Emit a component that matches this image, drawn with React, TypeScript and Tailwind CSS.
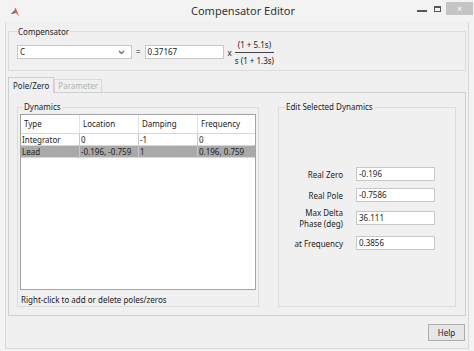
import React from 'react';

const rows = [
  { type: 'Integrator', loc: '0', damp: '-1', freq: '0', sel: false },
  { type: 'Lead', loc: '-0.196, -0.759', damp: '1', freq: '0.196, 0.759', sel: true },
];

function Field({ label, value, mt }: { label: React.ReactNode; value: string; mt: string }) {
  return (
    <div className={`flex items-center ${mt}`}>
      <div className="w-[64px] text-right leading-[11px]">{label}</div>
      <div className="ml-[13px] w-[79px] h-[14px] bg-white border border-[#c8c8c8] pl-[2px] leading-[12px]">{value}</div>
    </div>
  );
}

export default function App() {
  return (
    <div
      className="w-[474px] h-[351px] bg-[#f3f3f3] flex flex-col text-[8px] text-[#222]"
      style={{ fontFamily: '"Noto Sans", "Open Sans", sans-serif' }}
    >
      {/* Title bar */}
      <div className="h-[22px] flex items-center shrink-0">
        <div className="w-[60px] pl-[11px] flex items-center">
          <svg width="8" height="9" viewBox="0 0 8 9">
            <path d="M0 7 L3 4 L4.5 0.5 L8 9 L5 6 Z" fill="#e0602a" />
            <path d="M0 7 L3 4 L4 6 Z" fill="#3a6fb0" />
          </svg>
        </div>
        <div className="flex-1 text-center text-[11px] text-[#333] pl-[16px]">Compensator Editor</div>
        <div className="w-[64px] flex items-start h-full">
          <div className="w-[10px] ml-[7px] mt-[10px] h-[2px] bg-[#555]" />
          <div className="ml-[7px] mt-[6px] w-[7px] h-[6px] border border-[#555] border-t-2" />
          <div className="ml-[5px] mt-[2px] w-[27px] h-[13px] bg-[#c5c5c5] flex items-center justify-center text-white text-[9px]">
            ×
          </div>
        </div>
      </div>

      {/* Window body */}
      <div className="mx-[5px] flex-1 border-x border-b border-[#d9d9d9] bg-[#f0f0f0] flex flex-col px-[2px] mb-[2px]">
        {/* Compensator group */}
        <div className="relative mt-[9px] h-[40px] border border-[#dcdcdc] flex items-center pl-[8px]">
          <span className="absolute -top-[6px] left-[8px] px-[1px] bg-[#f0f0f0] text-[#222]">Compensator</span>
          <div className="w-[115px] h-[14px] bg-white border border-[#c8c8c8] flex items-center justify-between pl-[2px] pr-[6px] mt-[2px]">
            <span>C</span>
            <svg width="7" height="5" viewBox="0 0 7 5">
              <path d="M1 1 L3.5 3.5 L6 1" stroke="#666" strokeWidth="1.2" fill="none" />
            </svg>
          </div>
          <span className="ml-[4px] mt-[2px]">=</span>
          <div className="ml-[4px] w-[79px] h-[14px] bg-white border border-[#c8c8c8] pl-[2px] leading-[12px] mt-[2px]">0.37167</div>
          <span className="ml-[4px] mt-[4px]">x</span>
          <div className="ml-[3px] flex flex-col items-center mt-[2px]">
            <span className="px-[3px] leading-[11px]">(1 + 5.1s)</span>
            <div className="w-full h-[1px] bg-[#444] my-[2px]" />
            <span className="leading-[11px]">s (1 + 1.3s)</span>
          </div>
        </div>

        {/* Tabs */}
        <div className="mt-[6px] flex items-end h-[15px]">
          <div className="h-[16px] px-[4px] border border-b-0 border-[#cfcfcf] bg-[#f0f0f0] relative top-[1px] flex items-center">
            Pole/Zero
          </div>
          <div className="h-[13px] px-[3px] border border-b-0 border-[#d8d8d8] text-[#b0b0b0] flex items-center">
            Parameter
          </div>
        </div>
        <div className="h-[224px] border border-[#cfcfcf] flex pt-[14px] pl-[8px] pr-[9px]">
          {/* Dynamics */}
          <div className="relative w-[242px] h-[200px] border border-[#dcdcdc] flex flex-col px-[2px]">
            <span className="absolute -top-[7px] left-[5px] px-[1px] bg-[#f0f0f0]">Dynamics</span>
            <div className="mt-[6px] h-[177px] bg-white border border-[#a3a3a3]">
              <div className="grid grid-cols-[58px_59px_59px_1fr] h-[18px] items-center">
                {['Type', 'Location', 'Damping', 'Frequency'].map((h, i) => (
                  <div key={h} className={`pl-[3px] h-full flex items-center ${i > 0 ? 'border-l border-[#e3e3e3]' : ''}`}>
                    {h}
                  </div>
                ))}
              </div>
              {rows.map((r) => (
                <div
                  key={r.type}
                  className={`grid grid-cols-[58px_59px_59px_1fr] h-[12px] leading-[12px] border-t border-[#d8d8d8] ${r.sel ? 'bg-[#a9a9a9]' : 'bg-white'}`}
                >
                  <div className="pl-[1px]">{r.type}</div>
                  <div className="pl-[1px] border-l border-[#c8c8c8]">{r.loc}</div>
                  <div className="pl-[1px] border-l border-[#c8c8c8]">{r.damp}</div>
                  <div className="pl-[1px] border-l border-[#c8c8c8]">{r.freq}</div>
                </div>
              ))}
              <div className="border-t border-[#d8d8d8]" />
            </div>
            <div className="mt-[4px] pl-[1px]">Right-click to add or delete poles/zeros</div>
          </div>

          {/* Edit Selected Dynamics */}
          <div className="relative ml-[19px] flex-1 h-[200px] border border-[#dcdcdc] flex flex-col">
            <span className="absolute -top-[7px] left-[6px] px-[1px] bg-[#f0f0f0]">Edit Selected Dynamics</span>
            <Field label="Real Zero" value="-0.196" mt="mt-[59px]" />
            <Field label="Real Pole" value="-0.7586" mt="mt-[7px]" />
            <Field
              label={
                <>
                  Max Delta
                  <br />
                  Phase (deg)
                </>
              }
              value="36.111"
              mt="mt-[5px]"
            />
            <Field label="at Frequency" value="0.3856" mt="mt-[7px]" />
          </div>
        </div>

        {/* Bottom */}
        <div className="flex justify-end pr-[1px] mt-[8px]">
          <div className="w-[37px] h-[17px] border border-[#adadad] bg-[#e6e6e6] flex items-center justify-center">
            Help
          </div>
        </div>
      </div>
    </div>
  );
}
